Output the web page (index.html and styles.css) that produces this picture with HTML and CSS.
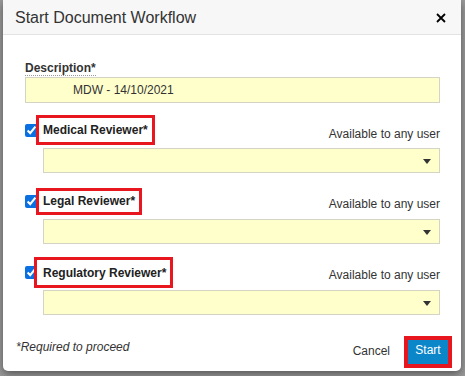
FILE: index.html
```html
<!DOCTYPE html>
<html>
<head>
<meta charset="utf-8">
<link rel="stylesheet" href="styles.css">
</head>
<body>
<div class="dialog">
  <div class="header">
    <span class="title">Start Document Workflow</span>
    <span class="close"><svg width="10" height="10" viewBox="0 0 10 10"><path d="M1 1L9 9M9 1L1 9" stroke="#000" stroke-width="1.8" fill="none"/></svg></span>
  </div>
  <div class="body">
    <div class="desc">
      <span class="desc-label">Description*</span>
      <div class="input">MDW - 14/10/2021</div>
    </div>

    <div class="reviewer rv1">
      <div class="rev-head">
        <input type="checkbox" class="cb" checked>
        <span class="mark">Medical Reviewer*</span>
        <span class="avail">Available to any user</span>
      </div>
      <div class="select"><span class="caret"></span></div>
    </div>

    <div class="reviewer rv2">
      <div class="rev-head">
        <input type="checkbox" class="cb" checked>
        <span class="mark">Legal Reviewer*</span>
        <span class="avail">Available to any user</span>
      </div>
      <div class="select"><span class="caret"></span></div>
    </div>

    <div class="reviewer rv3">
      <div class="rev-head">
        <input type="checkbox" class="cb" checked>
        <span class="mark">Regulatory Reviewer*</span>
        <span class="avail">Available to any user</span>
      </div>
      <div class="select"><span class="caret"></span></div>
    </div>
  </div>
  <div class="footer">
    <span class="req">*Required to proceed</span>
    <span class="cancel">Cancel</span>
    <span class="start-mark"><span class="start">Start</span></span>
  </div>
</div>
</body>
</html>
```

FILE: styles.css
```css
html, body {
  margin: 0;
  padding: 0;
}
body {
  background: #9a9a9a;
  width: 465px;
  height: 376px;
  overflow: hidden;
  font-family: "Liberation Sans", Arial, sans-serif;
  color: #333;
}
.dialog {
  margin-left: 3px;
  width: 458px;
  height: 371px;
  background: #fff;
  border-radius: 0 0 5px 5px;
  box-shadow: 0 3px 8px rgba(0, 0, 0, 0.45);
  display: flex;
  flex-direction: column;
}
.header {
  height: 35px;
  box-sizing: border-box;
  background: #f7f7f7;
  border-bottom: 1px solid #e3e3e3;
  display: flex;
  align-items: center;
  justify-content: space-between;
  padding: 0 15px 0 12px;
}
.title {
  font-size: 16px;
  line-height: 18px;
  color: #333;
  padding-top: 1px;
}
.close {
  display: flex;
  width: 10px;
  height: 10px;
  margin-top: 1px;
}
.body {
  padding: 0 21px 0 22px;
}
.desc {
  margin-top: 23px;
}
.desc-label {
  display: inline-block;
  font-size: 12px;
  font-weight: bold;
  line-height: 14px;
  border-bottom: 1px dotted #999;
}
.input {
  margin-top: 1px;
  height: 24px;
  border: 1px solid #d4d4c4;
  background: #ffffcc;
  font-size: 12px;
  line-height: 24px;
  padding-left: 47px;
  color: #333;
}
.reviewer {
  display: flex;
  flex-direction: column;
}
.rv1 { margin-top: 12px; }
.rv2 { margin-top: 15px; }
.rv3 { margin-top: 13px; }
.rev-head {
  display: flex;
  align-items: center;
}
.cb {
  width: 13px;
  height: 13px;
  margin: 0;
  accent-color: #0a6fe0;
  flex: none;
}
.mark {
  border: 3px solid #e8161e;
  font-size: 12px;
  font-weight: bold;
  line-height: 14px;
  color: #222;
  background: #fff;
  position: relative;
}
.rv1 .mark {
  margin-left: -2px;
  padding: 5px 4px 5px 4px;
}
.rv2 .mark {
  margin-left: -2px;
  padding: 3px 4px 4px 4px;
}
.rv3 .mark {
  margin-left: -4px;
  padding: 6px 4px 5px 6px;
}
.avail {
  margin-left: auto;
  font-size: 12px;
  line-height: 14px;
  align-self: flex-end;
  margin-bottom: 4px;
  color: #333;
}
.rv3 .avail {
  margin-bottom: 6px;
}
.select {
  margin-left: 18px;
  height: 23px;
  border: 1px solid #d4d4c4;
  background: #ffffcc;
  display: flex;
  align-items: center;
  justify-content: flex-end;
  padding-right: 8px;
}
.rv1 .select { margin-top: 3px; }
.rv2 .select { margin-top: 4px; }
.rv3 .select { margin-top: 2px; }
.caret {
  width: 0;
  height: 0;
  border-left: 4px solid transparent;
  border-right: 4px solid transparent;
  border-top: 5px solid #333;
  margin-top: 1px;
}
.footer {
  margin-top: auto;
  display: flex;
  align-items: center;
  padding: 0 9px 3px 13px;
}
.req {
  font-size: 12px;
  font-style: italic;
  line-height: 14px;
  align-self: flex-start;
  margin-top: 4px;
}
.cancel {
  margin-left: auto;
  font-size: 12px;
  line-height: 14px;
  margin-right: 14px;
  margin-top: -2px;
}
.start-mark {
  display: flex;
  border: 4px solid #e8161e;
}
.start {
  width: 40px;
  height: 24px;
  background: #0b86c8;
  color: #fff;
  font-size: 12px;
  line-height: 20px;
  text-align: center;
}
```
